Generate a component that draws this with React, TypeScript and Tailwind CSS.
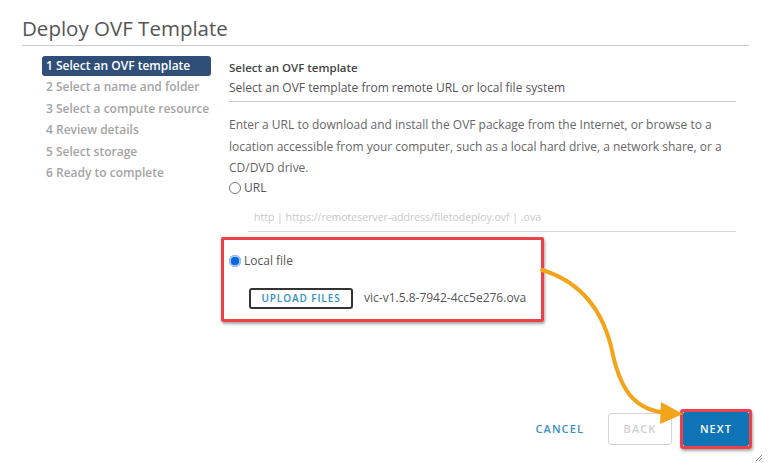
import React from "react";

const steps = [
  "1 Select an OVF template",
  "2 Select a name and folder",
  "3 Select a compute resource",
  "4 Review details",
  "5 Select storage",
  "6 Ready to complete",
];

export default function App() {
  return (
    <div
      className="relative w-[768px] h-[463px] bg-white overflow-hidden flex flex-col text-[#565656]"
      style={{ fontFamily: "'Open Sans', Lato, sans-serif" }}
    >
      <div className="pl-[22px] pr-[19px] pt-[16px]">
        <h1 className="text-[20.5px] leading-[25px] pb-[4px] border-b border-[#cccccc] text-[#555]">
          Deploy OVF Template
        </h1>
      </div>

      <div className="flex pl-[42px] pt-[10px]">
        <nav className="w-[169px] flex flex-col">
          {steps.map((s, i) =>
            i === 0 ? (
              <div
                key={s}
                className="h-[20px] rounded-[3px] bg-[#2f4f78] text-white text-[12px] font-semibold leading-[20px] px-[4px] whitespace-nowrap"
              >
                {s}
              </div>
            ) : (
              <div
                key={s}
                className="h-[21.6px] leading-[21.6px] text-[12px] font-semibold text-[#a4a4a4] px-[4px] whitespace-nowrap"
              >
                {s}
              </div>
            )
          )}
        </nav>

        <div className="ml-[18px] w-[507px] flex flex-col">
          <div className="text-[11.5px] font-semibold text-[#444] leading-[14px] pt-[5px]">Select an OVF template</div>
          <div className="text-[12px] text-[#555] leading-[15px] pt-[5px] pb-[6px] border-b border-[#cccccc]">
            Select an OVF template from remote URL or local file system
          </div>
          <p className="text-[12px] leading-[21.5px] text-[#666] pt-[12px]">
            Enter a URL to download and install the OVF package from the Internet, or browse to a location accessible
            from your computer, such as a local hard drive, a network share, or a CD/DVD drive.
          </p>
          <div className="flex items-center gap-[3px] h-[18px] text-[12px] text-[#555]">
            <span className="w-[12px] h-[12px] rounded-full border border-[#777] bg-white" />
            <span>URL</span>
          </div>
          <div className="ml-[19px] mt-[9px] h-[26px] border-b border-[#d8d8d8] flex items-center pl-[6px] text-[10.5px] text-[#c8c8c8]">
            http | https://remoteserver-address/filetodeploy.ovf | .ova
          </div>

          <div className="mt-[5px] -ml-[8px] w-[323px] h-[85px] border-[3px] border-[#ec4149] rounded-[2px] shadow-[1px_2px_3px_rgba(0,0,0,0.35)] pl-[5px] pt-[12px]">
            <div className="flex items-center gap-[3px] text-[12px] text-[#555]">
              <span className="w-[12px] h-[12px] rounded-full bg-[#0b6be0] ring-2 ring-[#a9c9f0] ring-inset flex items-center justify-center">
                <span className="w-[8px] h-[8px] rounded-full bg-[#0a66e6]" />
              </span>
              <span>Local file</span>
            </div>
            <div className="flex items-center mt-[18px] ml-[20px]">
              <button className="w-[104px] h-[21px] border-2 border-[#333] rounded-[3px] text-[10px] font-semibold tracking-[0.09em] text-[#2f8fc6] flex items-center justify-center">
                UPLOAD FILES
              </button>
              <span className="ml-[11px] text-[12px] text-[#555]">vic-v1.5.8-7942-4cc5e276.ova</span>
            </div>
          </div>
        </div>
      </div>

      <div className="mt-auto flex items-center justify-end pr-[16px] pb-[14px]">
        <button className="text-[11px] font-semibold tracking-[0.1em] text-[#3a8fc4] mr-[24px]">CANCEL</button>
        <button className="w-[64px] h-[32px] border border-[#d4d4d4] rounded-[3px] text-[11px] font-semibold tracking-[0.1em] text-[#cfcfcf] mr-[8px]">
          BACK
        </button>
        <div className="border-[3px] border-[#ec4149] rounded-[3px] shadow-[1px_2px_3px_rgba(0,0,0,0.35)]">
          <button className="w-[66px] h-[34px] bg-[#0f74b6] rounded-[2px] text-[11px] font-semibold tracking-[0.1em] text-white">
            NEXT
          </button>
        </div>
      </div>

      <svg className="absolute left-0 top-0 pointer-events-none" width="768" height="463">
        <path
          d="M542 270 C 585 283, 605 315, 613 355 C 622 395, 638 410, 666 413"
          fill="none"
          stroke="#f2a51b"
          strokeWidth="4"
          strokeLinecap="round"
        />
        <polygon points="661,402 683,414 660,424" fill="#f2a51b" />
        <path d="M756 461 L762 455 M759 461 L762 458" stroke="#888" strokeWidth="1" />
      </svg>
    </div>
  );
}
